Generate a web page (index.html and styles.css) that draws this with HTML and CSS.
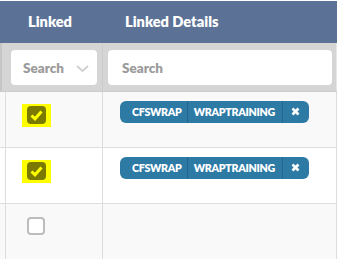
FILE: index.html
```html
<!DOCTYPE html>
<html>
<head>
<meta charset="utf-8">
<link rel="stylesheet" href="styles.css">
</head>
<body>
<div class="table">
  <div class="row head">
    <div class="c0"></div>
    <div class="c1 hcell">Linked</div>
    <div class="c2 hcell">Linked Details</div>
  </div>
  <div class="row filter">
    <div class="c0"></div>
    <div class="c1 fcell">
      <div class="input select"><span class="ph">Search</span>
        <svg class="chev" width="13" height="7" viewBox="0 0 13 7"><path d="M1 1 L6.5 6 L12 1" fill="none" stroke="#cfcfcf" stroke-width="1.8"/></svg>
      </div>
    </div>
    <div class="c2 fcell">
      <div class="input text"><span class="ph">Search</span></div>
    </div>
  </div>
  <div class="row body odd">
    <div class="c0"></div>
    <div class="c1 cbcell">
      <span class="hl"><span class="cb on"><svg width="19" height="18" viewBox="0 0 19 18"><path d="M4.5 9.5 L8 12.8 L14.5 5.5" fill="none" stroke="#ffff00" stroke-width="3"/></svg></span></span>
    </div>
    <div class="c2 tagcell">
      <span class="tag"><span class="seg first">CFSWRAP</span><span class="seg mid">WRAPTRAINING</span><span class="seg x"><svg width="9" height="9" viewBox="0 0 9 9"><path d="M1.5 1.5 L7.5 7.5 M7.5 1.5 L1.5 7.5" stroke="#fff" stroke-width="2.6"/></svg></span></span>
    </div>
  </div>
  <div class="row body even">
    <div class="c0"></div>
    <div class="c1 cbcell">
      <span class="hl"><span class="cb on"><svg width="19" height="18" viewBox="0 0 19 18"><path d="M4.5 9.5 L8 12.8 L14.5 5.5" fill="none" stroke="#ffff00" stroke-width="3"/></svg></span></span>
    </div>
    <div class="c2 tagcell">
      <span class="tag"><span class="seg first">CFSWRAP</span><span class="seg mid">WRAPTRAINING</span><span class="seg x"><svg width="9" height="9" viewBox="0 0 9 9"><path d="M1.5 1.5 L7.5 7.5 M7.5 1.5 L1.5 7.5" stroke="#fff" stroke-width="2.6"/></svg></span></span>
    </div>
  </div>
  <div class="row body odd">
    <div class="c0"></div>
    <div class="c1 cbcell">
      <span class="hl plain"><span class="cb off"></span></span>
    </div>
    <div class="c2"></div>
  </div>
</div>
</body>
</html>
```

FILE: styles.css
```css
html, body {
  margin: 0;
  padding: 0;
  background: #ffffff;
}
body {
  font-family: Lato, "Noto Sans", sans-serif;
}
.table {
  width: 337px;
  margin-top: 1px;
}
.row {
  display: grid;
  grid-template-columns: 6px 97px 234px;
}
.c0, .c1, .c2 {
  box-sizing: border-box;
}
.head {
  height: 42px;
  background: #5b7296;
}
.hcell {
  color: #ffffff;
  font-weight: 800;
  font-size: 14.6px;
  padding-left: 22px;
  display: flex;
  align-items: center;
  padding-bottom: 2px;
}
.filter {
  height: 49px;
  background: #d5d5d5;
  border-bottom: 1px solid #cccccc;
  box-sizing: border-box;
}
.filter .c0 {
  border-left: 2px solid #c6c6c6;
}
.filter .c1 {
  border-right: 1px solid #cbcbcb;
}
.filter .c2 {
  border-right: 1px solid #e6e6e6;
}
.fcell {
  padding: 7px 5px 6px 5px;
}
.filter .c2.fcell {
  padding-right: 4px;
}
.input {
  height: 35px;
  background: #ffffff;
  border-radius: 4px;
  display: flex;
  align-items: center;
  box-sizing: border-box;
}
.ph {
  color: #9c9c9c;
  font-weight: 800;
  font-size: 13.5px;
}
.select {
  padding-left: 12px;
}
.select .chev {
  margin-left: 12px;
  margin-top: 2px;
}
.text {
  padding-left: 14px;
}
.body {
  height: 55px;
  border-bottom: 1px solid #dddddd;
}
.body.odd {
  background: #f9f9f9;
}
.body.even {
  background: #ffffff;
}
.body .c0, .body .c1, .body .c2 {
  border-right: 1px solid #dddddd;
}
.cbcell {
  padding: 12px 0 0 16px;
}
.hl {
  display: inline-flex;
  padding: 2px 5px 3px 5px;
  background: #ffff00;
}
.hl.plain {
  background: transparent;
  padding-top: 1px;
}
.cb {
  width: 19px;
  height: 18px;
  border-radius: 4px;
  box-sizing: border-box;
  display: flex;
}
.cb.on {
  background: #7a7a00;
}
.cb.off {
  width: 18px;
  border: 2px solid #bdbdbd;
  background: #ffffff;
}
.tagcell {
  padding: 8px 0 0 17px;
}
.tag {
  display: inline-flex;
  height: 22px;
  background: #2d7aa5;
  border-radius: 6px;
  color: #ffffff;
  font-weight: 800;
  font-size: 10.7px;
  letter-spacing: -0.3px;
  align-items: stretch;
}
.seg {
  display: flex;
  align-items: center;
}
.seg.first {
  padding: 0 5px 0 12px;
}
.seg.mid {
  border-left: 1px solid #236690;
  padding: 0 7px 0 6px;
}
.seg.x {
  border-left: 1px solid #236690;
  width: 26px;
  justify-content: center;
}
```
